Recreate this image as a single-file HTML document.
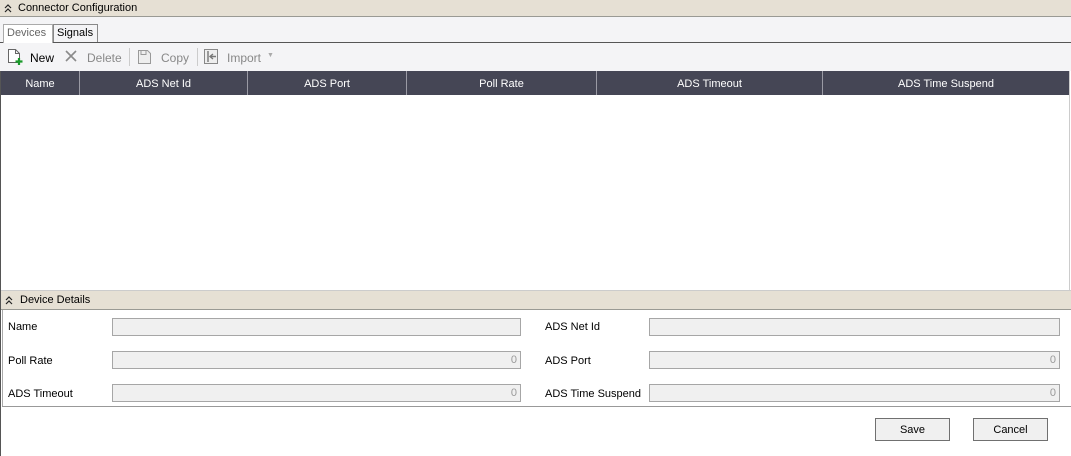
<!DOCTYPE html>
<html><head><meta charset="utf-8"><style>
*{margin:0;padding:0;box-sizing:border-box}
body{width:1071px;height:456px;background:#fff;font-family:"Liberation Sans",Arial,sans-serif;font-size:11px;color:#000;position:relative;overflow:hidden}
.a{position:absolute}
.bar{background:#e6e0d4;border-bottom:1px solid #9a9a94}
.t{position:absolute;white-space:nowrap}
.inp{position:absolute;height:18px;background:#f0f0f0;border:1px solid #a6a6a6;font-size:11px;color:#999;text-align:right;padding-right:3px;line-height:16px}
.hd{position:absolute;top:71px;height:24px;color:#fff;text-align:center;line-height:26px;border-left:1px solid #9a9aa4}
.btn{position:absolute;top:418px;height:23px;border:1px solid #707070;background:#f0f0f0;text-align:center;line-height:23px}
.g{color:#888}
</style></head><body>
<div class="a bar" style="left:0;top:0;width:1071px;height:17px"></div>
<svg class="a" style="left:4px;top:3px" width="8" height="10"><path d="M1 5l3-3 3 3M1 9l3-3 3 3" stroke="#222" stroke-width="1.2" fill="none"/></svg>
<div class="t" style="left:18px;top:2px">Connector Configuration</div>
<div class="a" style="left:0;top:17px;width:1071px;height:54px;background:#f4f4f6"></div>
<div class="a" style="left:0;top:42px;width:1071px;height:1px;background:#555"></div>
<div class="a" style="left:3px;top:24px;width:50px;height:19px;background:#fff;border:1px solid #aaa;border-bottom:none"></div>
<div class="t g" style="left:7px;top:27px;color:#666">Devices</div>
<div class="a" style="left:53px;top:24px;width:45px;height:18px;border:1px solid #888;border-bottom:none;background:#f4f4f6"></div>
<div class="t" style="left:57px;top:27px">Signals</div>
<svg class="a" style="left:7px;top:48px" width="16" height="18"><path d="M1.5 1.5h7l4 4v9h-11z" fill="#fff" stroke="#666"/><path d="M8.5 1.5v4h4" fill="none" stroke="#666"/><path d="M12 10v7M8.5 13.5h7" stroke="#1a9a2a" stroke-width="2.2"/></svg>
<div class="t" style="left:30px;top:51px;font-size:12px">New</div>
<svg class="a" style="left:64px;top:49px" width="14" height="14"><path d="M2 2l10 10M12 2L2 12" stroke="#8a8a8a" stroke-width="1.6"/></svg>
<div class="t g" style="left:87px;top:51px;font-size:12px">Delete</div>
<div class="a" style="left:129px;top:48px;width:1px;height:18px;background:#ccc"></div>
<svg class="a" style="left:137px;top:48px" width="16" height="17"><path d="M1.5 2.5h9l3 3v10h-12z" fill="#eee" stroke="#999"/><path d="M4 2.5v4h5v-4" fill="none" stroke="#999"/></svg>
<div class="t g" style="left:161px;top:51px;font-size:12px">Copy</div>
<div class="a" style="left:197px;top:48px;width:1px;height:18px;background:#ccc"></div>
<svg class="a" style="left:203px;top:48px" width="16" height="17"><rect x="1.5" y="1.5" width="13" height="14" fill="#eee" stroke="#888"/><path d="M5 3v11M13 8.5H8M10 6l-3 2.5 3 2.5" stroke="#777" stroke-width="1.4" fill="none"/></svg>
<div class="t g" style="left:227px;top:51px;font-size:12px">Import</div>
<div class="t" style="left:267px;top:52px;font-size:7px;color:#aaa">&#9660;</div>
<div class="a" style="left:1px;top:71px;width:1068px;height:24px;background:#454655"></div>
<div class="hd" style="left:1px;width:78px;border-left:none">Name</div>
<div class="hd" style="left:79px;width:168px">ADS Net Id</div>
<div class="hd" style="left:247px;width:159px">ADS Port</div>
<div class="hd" style="left:406px;width:190px">Poll Rate</div>
<div class="hd" style="left:596px;width:226px">ADS Timeout</div>
<div class="hd" style="left:822px;width:247px">ADS Time Suspend</div>
<div class="a" style="left:0;top:71px;width:1px;height:385px;background:#555"></div>
<div class="a" style="left:1069px;top:71px;width:1px;height:219px;background:#ccc"></div>
<div class="a bar" style="left:1px;top:290px;width:1070px;height:20px;border-top:1px solid #ccc"></div>
<svg class="a" style="left:5px;top:295px" width="8" height="10"><path d="M1 5l3-3 3 3M1 9l3-3 3 3" stroke="#222" stroke-width="1.2" fill="none"/></svg>
<div class="t" style="left:20px;top:294px">Device Details</div>
<div class="a" style="left:2px;top:310px;width:1px;height:96px;background:#aaa"></div>
<div class="a" style="left:2px;top:406px;width:1069px;height:1px;background:#999"></div>
<div class="t" style="left:8px;top:321px">Name</div>
<div class="t" style="left:8px;top:355px">Poll Rate</div>
<div class="t" style="left:8px;top:388px">ADS Timeout</div>
<div class="t" style="left:545px;top:321px">ADS Net Id</div>
<div class="t" style="left:545px;top:355px">ADS Port</div>
<div class="t" style="left:545px;top:388px">ADS Time Suspend</div>
<div class="inp" style="left:112px;top:318px;width:409px"></div>
<div class="inp" style="left:112px;top:351px;width:409px">0</div>
<div class="inp" style="left:112px;top:384px;width:409px">0</div>
<div class="inp" style="left:649px;top:318px;width:411px"></div>
<div class="inp" style="left:649px;top:351px;width:411px">0</div>
<div class="inp" style="left:649px;top:384px;width:411px">0</div>
<div class="btn" style="left:875px;width:75px">Save</div>
<div class="btn" style="left:973px;width:75px">Cancel</div>
</body></html>
